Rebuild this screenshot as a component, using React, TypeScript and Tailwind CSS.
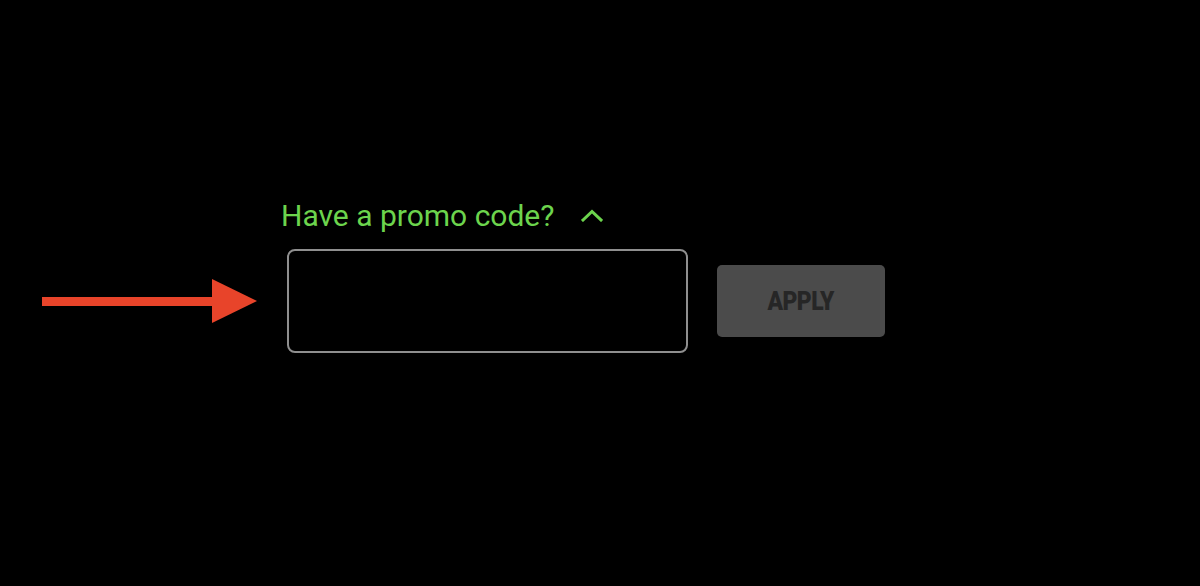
import { useState } from 'react'

function ChevronUp() {
  return (
    <svg
      className="h-[13px] w-[22px] shrink-0 text-[#6cd44d]"
      viewBox="0 0 22 13"
      fill="none"
      stroke="currentColor"
      strokeWidth={3}
      strokeLinecap="square"
      aria-hidden
    >
      <polyline points="2 11 11 2.5 20 11" />
    </svg>
  )
}

function RedArrow() {
  return (
    <svg
      className="h-[44px] w-[215px] shrink-0"
      viewBox="0 0 215 44"
      aria-hidden
    >
      <rect x="0" y="18" width="172" height="9" fill="#e8442a" />
      <polygon points="170,0 215,22 170,44" fill="#e8442a" />
    </svg>
  )
}

export default function App() {
  const [code, setCode] = useState('')

  return (
    <div className="flex h-[586px] w-full flex-col bg-black pt-[198px] font-['Roboto','Liberation_Sans',sans-serif]">
      <button
        type="button"
        className="ml-[281px] flex items-center gap-[27px] self-start text-[30px] leading-[35px] text-[#6cd44d]"
      >
        <span>Have a promo code?</span>
        <ChevronUp />
      </button>

      <div className="mt-[16px] flex items-center pl-[42px]">
        <RedArrow />
        <input
          value={code}
          onChange={(e) => setCode(e.target.value)}
          aria-label="Promo code"
          className="ml-[30px] h-[104px] w-[401px] rounded-lg border-2 border-[#8f8f8f] bg-black px-4 text-xl text-white outline-none"
        />
        <button
          type="button"
          disabled
          className="ml-[29px] flex h-[72px] w-[168px] items-center justify-center rounded-[5px] bg-[#4b4b4b]"
        >
          <span className="inline-block scale-x-[0.88] text-[26px] font-black leading-none tracking-tight text-[#262626]">
            APPLY
          </span>
        </button>
      </div>
    </div>
  )
}
